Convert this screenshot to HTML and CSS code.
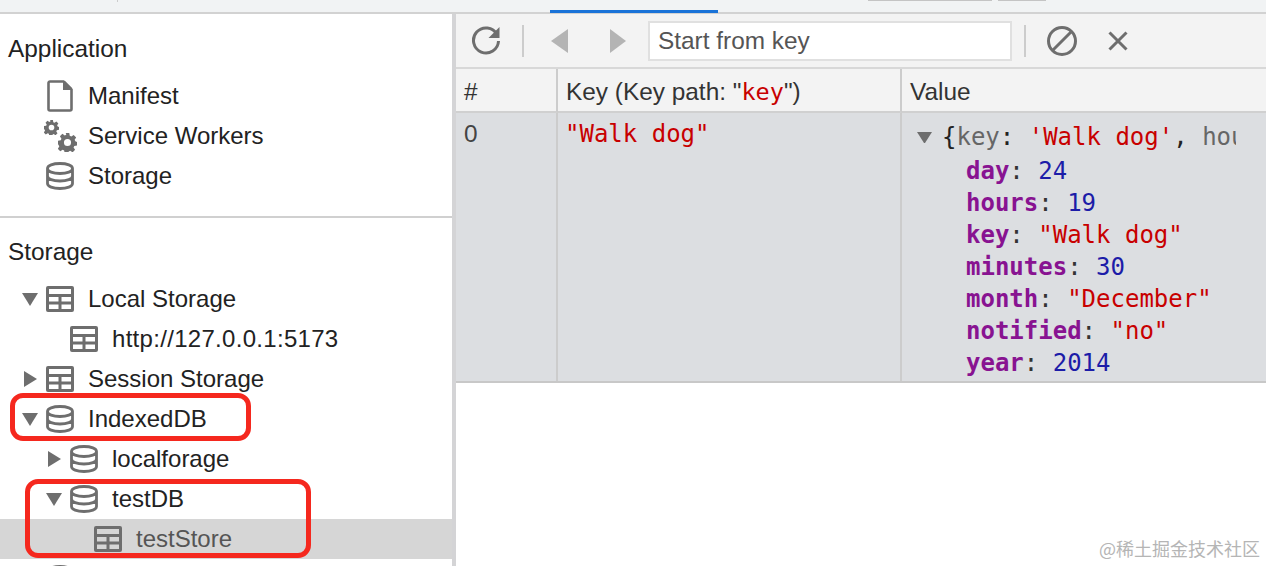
FILE: index.html
```html
<!DOCTYPE html>
<html lang="en">
<head>
  <meta charset="UTF-8">
  <title>Application - IndexedDB</title>
  <link rel="stylesheet" href="styles.css">
</head>
<body>
  <svg class="defs" width="0" height="0">
    <symbol id="i-table" viewBox="0 0 28 28">
      <path fill="none" stroke="#6e6e6e" stroke-width="3" d="M2 2.500h24a.5.5 0 0 1 .5.5v22a.5.5 0 0 1-.5.5H2a.5.5 0 0 1-.5-.5V3a.5.5 0 0 1 .5-.5zM1.500 10.500h25M1.500 18h25M14 10.500v15"/>
    </symbol>
    <symbol id="i-db" viewBox="0 0 28 28">
      <path fill="none" stroke="#6e6e6e" stroke-width="2.800" d="M1.500 6.500C1.500 3.500 7 1.500 14 1.500s12.500 2 12.500 5-5.500 5-12.500 5-12.500-2-12.500-5zM1.500 6.500v15c0 3 5.500 5 12.500 5s12.500-2 12.500-5v-15M1.500 14c0 3 5.500 5 12.500 5s12.500-2 12.500-5"/>
    </symbol>
    <symbol id="i-gear" viewBox="0 0 16 16">
      <path fill="#6e6e6e" fill-rule="evenodd" d="M6.500 0h3l.4 2.300 1.300.6L13.200 1.600l2.100 2.100-1.300 2 .6 1.300 1.400.5v3l-2.300.4-.6 1.300 1.300 2-2.100 2.100-2-1.300-1.300.6-.4 1.400h-3l-.4-2.300-1.300-.6-2 1.300-2.100-2.100 1.300-2-.6-1.300L0 9.500v-3l2.300-.4.6-1.300-1.300-2L3.700.7l2 1.300 1.300-.6zM8 5a3 3 0 1 0 0 6 3 3 0 0 0 0-6z"/>
    </symbol>
  </svg>

  <div class="topbar">
    <span class="tick"></span>
    <span class="tab-line"></span>
    <span class="top-chip chip-a"></span>
    <span class="top-chip chip-b"></span>
  </div>

  <div class="panels">
    <div class="sidebar">
      <div class="side-section app-section">
        <h2>Application</h2>
        <div class="row">
          <span class="arrow"></span>
          <span class="icon">
            <svg width="26" height="32" viewBox="0 0 26 32"><path fill="none" stroke="#6e6e6e" stroke-width="2.600" d="M3 1.500h13.500l8 8V29a1.500 1.500 0 0 1-1.500 1.500H3A1.500 1.500 0 0 1 1.500 29V3A1.500 1.500 0 0 1 3 1.500z"/><path fill="#6e6e6e" d="M16 1h2l7 7v2h-9z"/></svg>
          </span>
          <span>Manifest</span>
        </div>
        <div class="row">
          <span class="arrow"></span>
          <span class="icon">
            <svg width="34" height="32" viewBox="0 0 34 32"><use href="#i-gear" x="1" y="0" width="15" height="15"/><use href="#i-gear" x="15" y="13" width="19" height="19"/></svg>
          </span>
          <span>Service Workers</span>
        </div>
        <div class="row">
          <span class="arrow"></span>
          <span class="icon"><svg class="ico"><use href="#i-db"/></svg></span>
          <span>Storage</span>
        </div>
      </div>

      <div class="side-section store-section">
        <h2>Storage</h2>
        <div class="row">
          <span class="arrow down"></span>
          <span class="icon"><svg class="ico"><use href="#i-table"/></svg></span>
          <span>Local Storage</span>
        </div>
        <div class="row level-1">
          <span class="arrow"></span>
          <span class="icon"><svg class="ico"><use href="#i-table"/></svg></span>
          <span class="url">http://127.0.0.1:5173</span>
        </div>
        <div class="row">
          <span class="arrow right"></span>
          <span class="icon"><svg class="ico"><use href="#i-table"/></svg></span>
          <span>Session Storage</span>
        </div>
        <div class="row">
          <span class="arrow down"></span>
          <span class="icon"><svg class="ico"><use href="#i-db"/></svg></span>
          <span>IndexedDB</span>
        </div>
        <div class="row level-1">
          <span class="arrow right"></span>
          <span class="icon"><svg class="ico"><use href="#i-db"/></svg></span>
          <span>localforage</span>
        </div>
        <div class="row level-1">
          <span class="arrow down"></span>
          <span class="icon"><svg class="ico"><use href="#i-db"/></svg></span>
          <span>testDB</span>
        </div>
        <div class="row level-2 selected">
          <span class="arrow"></span>
          <span class="icon"><svg class="ico"><use href="#i-table"/></svg></span>
          <span>testStore</span>
        </div>
        <div class="row">
          <span class="arrow"></span>
          <span class="icon"><svg class="ico"><use href="#i-db"/></svg></span>
          <span></span>
        </div>
      </div>

      <div class="mark mark-indexed"></div>
      <div class="mark mark-testdb"></div>
    </div>

    <div class="main">
      <div class="toolbar">
        <svg class="tool-refresh" width="30" height="30" viewBox="0 0 30 30"><path fill="none" stroke="#6e6e6e" stroke-width="3" d="M26 8.500A12.500 12.500 0 1 0 27.500 15"/><path fill="#6e6e6e" d="M28.500 1v11h-11z"/></svg>
        <span class="sep sep-a"></span>
        <span class="nav nav-back"></span>
        <span class="nav nav-next"></span>
        <div class="key-input">Start from key</div>
        <span class="sep sep-b"></span>
        <svg class="tool-clear" width="32" height="32" viewBox="0 0 32 32"><circle cx="16" cy="16" r="13.500" fill="none" stroke="#6e6e6e" stroke-width="3"/><path stroke="#6e6e6e" stroke-width="3" d="M25.500 6.500l-19 19"/></svg>
        <svg class="tool-close" width="20" height="20" viewBox="0 0 20 20"><path stroke="#6e6e6e" stroke-width="3" d="M1.500 1.500l17 17M18.500 1.500l-17 17"/></svg>
      </div>

      <div class="grid">
        <div class="cell head">#</div>
        <div class="cell head">Key (Key path: "<span class="key-path">key</span>")</div>
        <div class="cell head">Value</div>

        <div class="cell data">0</div>
        <div class="cell data code key-cell"><span class="str">"Walk dog"</span></div>
        <div class="cell data code value">
          <div class="summary"><span class="arrow down"></span>{<span class="dim">key</span>: <span class="str">'Walk dog'</span>, <span class="dim">hours</span></div>
          <div class="prop"><b>day</b>: <span class="num">24</span></div>
          <div class="prop"><b>hours</b>: <span class="num">19</span></div>
          <div class="prop"><b>key</b>: <span class="str">"Walk dog"</span></div>
          <div class="prop"><b>minutes</b>: <span class="num">30</span></div>
          <div class="prop"><b>month</b>: <span class="str">"December"</span></div>
          <div class="prop"><b>notified</b>: <span class="str">"no"</span></div>
          <div class="prop"><b>year</b>: <span class="num">2014</span></div>
        </div>
      </div>
    </div>
  </div>

  <div class="watermark">@稀土掘金技术社区</div>
</body>
</html>
```

FILE: styles.css
```css
html, body {
  margin: 0;
  height: 566px;
  overflow: hidden;
}

body {
  font-family: "Liberation Sans", Arial, sans-serif;
  font-size: 24.4px;
  color: #222;
  background-color: #fff;
  position: relative;
}

.defs {
  position: absolute;
}

.topbar {
  height: 12px;
  background-color: #f1f3f4;
  border-bottom: 2px solid #d2d2d2;
  display: flex;
  align-items: flex-start;
}

.tick {
  width: 1px;
  height: 2px;
  margin-left: 117px;
  background-color: #ccc;
}

.tab-line {
  width: 168px;
  height: 3px;
  margin: 10px 0 0 432px;
  background-color: #1a73d8;
}

.top-chip {
  height: 1px;
  background-color: #c4c4c4;
}

.chip-a {
  width: 124px;
  margin-left: 150px;
}

.chip-b {
  width: 48px;
  margin-left: 6px;
}

.panels {
  display: flex;
  height: 552px;
}

.sidebar {
  width: 452px;
  flex-shrink: 0;
  border-right: 4px solid #d4d4d6;
  position: relative;
  overflow: hidden;
}

.side-section h2 {
  margin: 0;
  font-size: 24.4px;
  font-weight: normal;
  padding-left: 8px;
  height: 48px;
  line-height: 42px;
}

.app-section {
  height: 188px;
  padding-top: 14px;
  border-bottom: 2px solid #d0d0d0;
}

.store-section {
  padding-top: 13px;
}

.row {
  display: flex;
  align-items: center;
  height: 40px;
  padding-left: 22px;
  font-size: 24px;
}

.level-1 {
  padding-left: 46px;
}

.level-2 {
  padding-left: 70px;
}

.selected {
  background-color: #d6d6d6;
  color: #555;
}

.url {
  letter-spacing: 0.3px;
}

.arrow {
  display: block;
  width: 16px;
  height: 16px;
  flex-shrink: 0;
  margin-right: 5px;
  box-sizing: border-box;
}

.arrow.down {
  border-style: solid;
  border-width: 13px 8px 0;
  border-color: #6e6e6e transparent transparent;
  height: 13px;
}

.arrow.right {
  border-style: solid;
  border-width: 8px 0 8px 13px;
  border-color: transparent transparent transparent #6e6e6e;
  margin-left: 2px;
  width: 14px;
}

.icon {
  width: 34px;
  height: 32px;
  flex-shrink: 0;
  margin-right: 11px;
  display: flex;
  align-items: center;
  justify-content: center;
}

.ico {
  width: 28px;
  height: 28px;
}

.mark {
  position: absolute;
  border: 5px solid #f5281e;
  border-radius: 13px;
  box-sizing: border-box;
}

.mark-indexed {
  left: 10px;
  top: 379px;
  width: 241px;
  height: 48px;
}

.mark-testdb {
  left: 25px;
  top: 465px;
  width: 286px;
  height: 79px;
}

.main {
  flex: 1;
  min-width: 0;
}

.toolbar {
  height: 53px;
  background-color: #f3f3f3;
  border-bottom: 2px solid #d8d8d8;
  display: flex;
  align-items: center;
}

.tool-refresh {
  margin-left: 15px;
  flex-shrink: 0;
}

.sep {
  width: 2px;
  height: 32px;
  background-color: #ccc;
  flex-shrink: 0;
}

.sep-a {
  margin-left: 21px;
}

.nav {
  width: 0;
  height: 0;
  border-style: solid;
  flex-shrink: 0;
}

.nav-back {
  margin-left: 27px;
  border-width: 12px 17px 12px 0;
  border-color: transparent #b4b4b4 transparent transparent;
}

.nav-next {
  margin-left: 42px;
  border-width: 12px 0 12px 16px;
  border-color: transparent transparent transparent #b4b4b4;
}

.key-input {
  width: 364px;
  height: 40px;
  line-height: 36px;
  margin-left: 22px;
  padding-left: 8px;
  background-color: #fff;
  border: 2px solid #e0e0e0;
  box-sizing: border-box;
  color: #555;
  flex-shrink: 0;
}

.sep-b {
  margin-left: 12px;
}

.tool-clear {
  margin-left: 20px;
  flex-shrink: 0;
}

.tool-close {
  margin-left: 30px;
  flex-shrink: 0;
}

.grid {
  display: grid;
  grid-template-columns: 102px 344px 1fr;
  grid-template-rows: 44px 268px;
  border-bottom: 2px solid #c8c8c8;
}

.cell {
  padding-left: 8px;
  border-right: 2px solid #ccc;
  box-sizing: border-box;
  overflow: hidden;
}

.cell:nth-child(3n) {
  border-right: 0;
}

.head {
  background-color: #f3f3f3;
  border-bottom: 2px solid #d0d0d0;
  line-height: 45px;
  color: #333;
}

.key-path {
  font-family: "DejaVu Sans Mono", monospace;
  font-size: 23.5px;
  color: #c80000;
}

.data {
  background-color: #dcdee1;
  padding-top: 7px;
  line-height: 28px;
  color: #444;
}

.code {
  font-family: "DejaVu Sans Mono", monospace;
  font-size: 24px;
}

.key-cell {
  padding-left: 7px;
}

.value {
  padding: 10px 0 0 15px;
}

.summary {
  display: flex;
  white-space: pre;
  align-items: center;
  width: 319px;
  overflow: hidden;
  height: 28px;
  margin-bottom: 4px;
  color: #222;
}

.summary .arrow {
  margin: 0 10px 0 0;
  border-width: 11px 7.500px 0;
  height: 11px;
  width: 15px;
}

.prop {
  height: 32px;
  line-height: 32px;
  padding-left: 49px;
  color: #333;
}

.prop b {
  color: #881391;
}

.str {
  color: #c80000;
}

.num {
  color: #1c1ca8;
}

.dim {
  color: #666;
}

.watermark {
  position: absolute;
  right: 6px;
  bottom: 8px;
  font-family: "Noto Sans CJK SC", sans-serif;
  font-size: 18px;
  line-height: 20px;
  color: #b5b5b5;
}
```
